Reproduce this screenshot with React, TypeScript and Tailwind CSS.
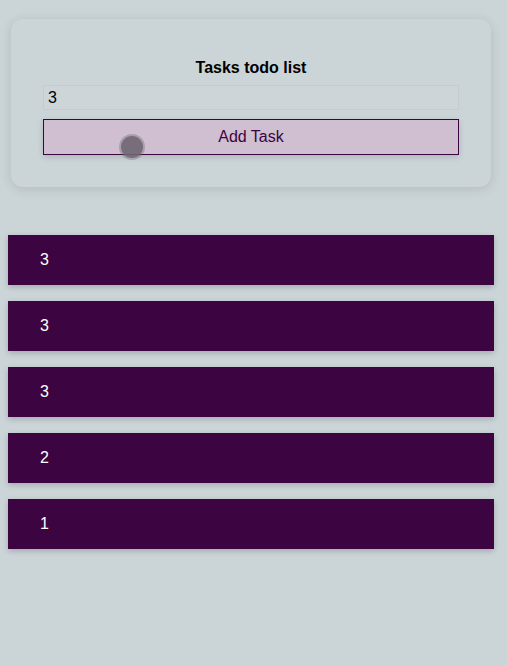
import React from "react";

export default function App() {
  const items = ["3", "3", "3", "2", "1"];
  return (
    <div className="min-h-[666px] w-full bg-[#cbd4d7] pt-[19px] font-['Liberation_Sans',Arial,sans-serif]">
      <div className="relative ml-[11px] w-[480px] rounded-[12px] bg-[#cbd4d7] px-[32px] pt-[40px] pb-[32px] shadow-[0_2px_12px_rgba(0,0,0,0.12)]">
        <h1 className="h-[18px] text-center text-[16px] font-bold leading-[18px] text-black">Tasks todo list</h1>
        <div className="mt-[8px] flex h-[25px] w-[416px] items-center border border-[#c4cccf] bg-[#cdd5d8] px-[4px] text-[16px] text-black">3</div>
        <div className="mt-[9px] flex h-[36px] w-[416px] items-center justify-center border border-[#3c0440] bg-[#cfbfd0] text-[16px] text-[#3c0440] shadow-[0_2px_6px_rgba(0,0,0,0.15)]">Add Task</div>
        <div className="absolute left-[110px] top-[117px] h-[22px] w-[22px] rounded-full bg-[#6f6670] opacity-90 shadow-[0_0_0_2px_rgba(111,102,112,0.4)]" />
      </div>
      <div className="mt-[48px] ml-[8px] flex w-[486px] flex-col gap-[16px]">
        {items.map((t, i) => (
          <div key={i} className="flex h-[50px] items-center bg-[#3c0440] pl-[32px] text-[16px] text-white shadow-[0_2px_6px_rgba(0,0,0,0.2)]">
            {t}
          </div>
        ))}
      </div>
    </div>
  );
}
